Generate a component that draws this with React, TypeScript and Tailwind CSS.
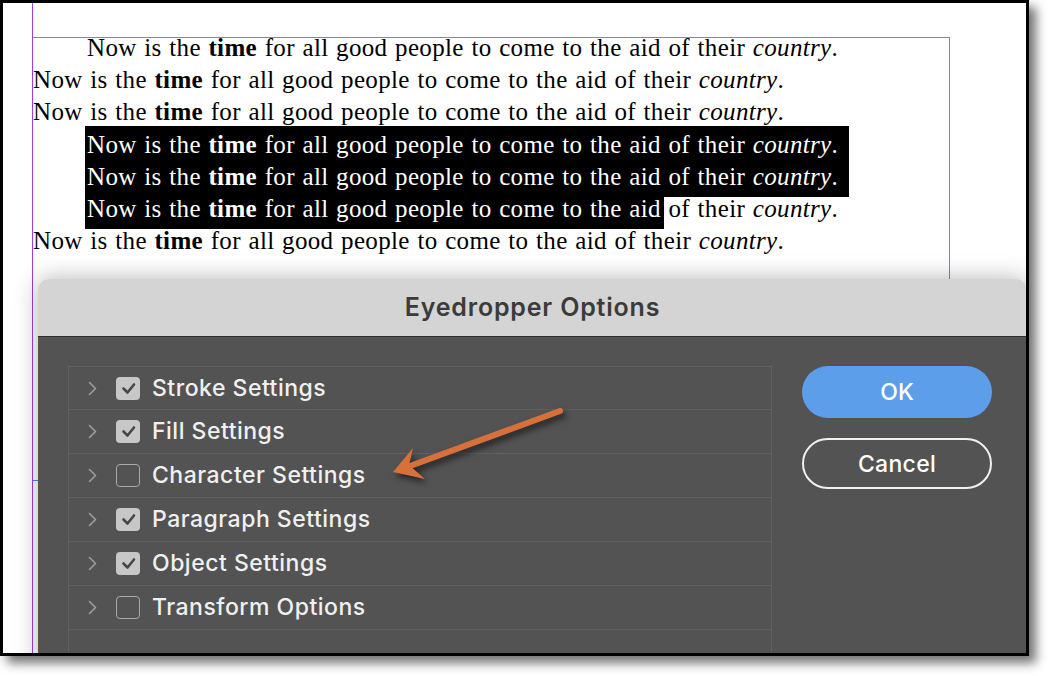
import React from "react";

const Part1 = () => (
  <>
    Now is the <span className="font-bold">time</span> for all good people to come to the aid
  </>
);
const Part2 = () => (
  <>
    {" "}of their <span className="italic">country</span>.
  </>
);

type Line = { indent: boolean; hl: "none" | "full" | "partial" };
const lines: Line[] = [
  { indent: true, hl: "none" },
  { indent: false, hl: "none" },
  { indent: false, hl: "none" },
  { indent: true, hl: "full" },
  { indent: true, hl: "full" },
  { indent: true, hl: "partial" },
  { indent: false, hl: "none" },
];

const Chevron = () => (
  <svg width="9" height="15" viewBox="0 0 9 15" fill="none">
    <polyline points="1.5,1.5 7.5,7.5 1.5,13.5" stroke="#9c9c9c" strokeWidth="1.6" strokeLinecap="round" strokeLinejoin="round" />
  </svg>
);

const Checkbox = ({ checked }: { checked: boolean }) =>
  checked ? (
    <div className="w-[24px] h-[23px] rounded-[4px] bg-[#c7c7c7] flex items-center justify-center">
      <svg width="24" height="23" viewBox="0 0 24 23" fill="none">
        <polyline points="7.5,11.5 11.5,15.5 18,7.5" stroke="#474747" strokeWidth="2.6" strokeLinecap="round" strokeLinejoin="round" />
      </svg>
    </div>
  ) : (
    <div className="w-[24px] h-[23px] rounded-[4px] border-[1.5px] border-[#a9a9a9]" />
  );

const rows = [
  { label: "Stroke Settings", checked: true },
  { label: "Fill Settings", checked: true },
  { label: "Character Settings", checked: false },
  { label: "Paragraph Settings", checked: true },
  { label: "Object Settings", checked: true },
  { label: "Transform Options", checked: false },
];

export default function App() {
  return (
    <div className="w-[1048px] h-[676px] bg-white relative overflow-hidden">
      <div className="w-[1029px] h-[656px] border-[3px] border-black bg-white relative overflow-hidden shadow-[7px_7px_10px_rgba(0,0,0,0.55)]">
        {/* text frame */}
        <div className="ml-[29px] mt-[34px] w-[918px] h-[700px] border border-[#5b8fe0]">
          <div className="-mt-[6px] font-['Liberation_Serif',serif] text-[25px] leading-[32.2px] tracking-[0.35px] [word-spacing:1px] text-black whitespace-nowrap">
            {lines.map((l, i) => (
              <div key={i} className={l.indent ? "pl-[54px]" : ""}>
                {l.hl === "none" && (
                  <>
                    <Part1 />
                    <Part2 />
                  </>
                )}
                {l.hl === "full" && (
                  <span className="bg-black text-white pt-[5px] pb-[7px] pl-[2px] -ml-[2px] pr-[11px]">
                    <Part1 />
                    <Part2 />
                  </span>
                )}
                {l.hl === "partial" && (
                  <>
                    <span className="bg-black text-white pt-[5px] pb-[7px] pl-[2px] -ml-[2px] pr-[3px] -mr-[3px]">
                      <Part1 />
                    </span>
                    <Part2 />
                  </>
                )}
              </div>
            ))}
          </div>
        </div>

        {/* margin guide */}
        <div className="absolute left-[29px] top-0 bottom-0 w-px bg-[#9d3cf5]" />
        <div className="absolute left-[30px] top-[477px] w-[5px] h-px bg-[#4a8fe6]" />

        {/* dialog */}
        <div className="absolute left-[35px] top-[276px] w-[989px] h-[420px] rounded-t-[11px] overflow-hidden shadow-[0_0_24px_rgba(0,0,0,0.3)] flex flex-col">
          <div className="h-[58px] shrink-0 bg-[#d4d4d4] border-b border-[#2e2e2e] flex items-center justify-center">
            <span className="font-['Inter',sans-serif] font-semibold text-[25px] text-[#3b3b3b] tracking-[0.8px]">
              Eyedropper Options
            </span>
          </div>
          <div className="flex-1 bg-[#535353] flex pl-[30px] pt-[29px] gap-[30px]">
            <div className="w-[704px] self-stretch border border-[#606060]">
              {rows.map((r, i) => (
                <div
                  key={r.label}
                  className={`${i === 0 ? "h-[43px]" : "h-[44px]"} border-b border-[#606060] flex items-center`}
                >
                  <div className="ml-[19px] w-[9px] flex items-center">
                    <Chevron />
                  </div>
                  <div className="ml-[19px]">
                    <Checkbox checked={r.checked} />
                  </div>
                  <span className="ml-[12px] font-['Inter',sans-serif] font-medium text-[23px] text-[#f0f0f0] tracking-[0.5px]">
                    {r.label}
                  </span>
                </div>
              ))}
            </div>
            <div className="w-[190px] flex flex-col gap-[20px]">
              <div className="h-[52px] rounded-full bg-[#5c9eea] flex items-center justify-center font-['Inter',sans-serif] font-medium text-[23px] text-white">
                OK
              </div>
              <div className="h-[51px] rounded-full border-2 border-[#f0f0f0] flex items-center justify-center font-['Inter',sans-serif] font-medium text-[23px] tracking-[0.3px] text-white">
                <span className="mt-[2px]">Cancel</span>
              </div>
            </div>
          </div>
        </div>
      </div>

      {/* annotation arrow */}
      <svg
        className="absolute left-0 top-0 pointer-events-none [filter:drop-shadow(3px_4px_3px_rgba(0,0,0,0.6))]"
        width="1048"
        height="676"
        viewBox="0 0 1048 676"
      >
        <line x1="560" y1="411" x2="410" y2="466" stroke="#d8703c" strokeWidth="6" strokeLinecap="round" />
        <polygon points="393,472 413,448 409,465 425,479" fill="#d8703c" />
      </svg>
    </div>
  );
}
